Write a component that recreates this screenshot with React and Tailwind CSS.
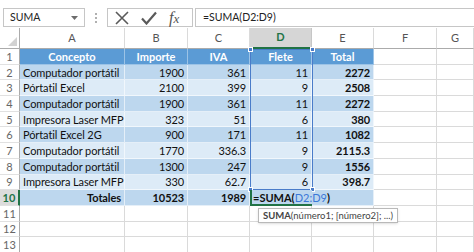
import React from "react";

const rows = [
  ["Computador portátil", "1900", "361", "11", "2272"],
  ["Pórtatil Excel", "2100", "399", "9", "2508"],
  ["Computador portátil", "1900", "361", "11", "2272"],
  ["Impresora Laser MFP", "323", "51", "6", "380"],
  ["Pórtatil Excel 2G", "900", "171", "11", "1082"],
  ["Computador portátil", "1770", "336.3", "9", "2115.3"],
  ["Computador portátil", "1300", "247", "9", "1556"],
  ["Impresora Laser MFP", "330", "62.7", "6", "398.7"],
];

const letters = ["A", "B", "C", "D", "E", "F", "G"];

const RowHead = ({ n, active }) => (
  <div
    className={`h-[15.7px] flex items-center justify-center text-[11px] leading-none border-b border-[#e1e1e1] ${
      active
        ? "bg-[#dcdcdc] text-[#217346] font-bold border-r-2 border-r-[#217346]"
        : "bg-white text-[#666] border-r border-r-[#ababab]"
    }`}
  >
    {n}
  </div>
);

const Empty = () => <div className="h-[15.7px] bg-white border-r border-b border-[#dadada]" />;

const Cell = ({ children, bg, align = "right", bold }) => (
  <div
    className={`h-[15.7px] flex items-center px-[3px] text-[11px] tracking-[-0.1px] leading-none text-[#111] whitespace-nowrap border-r border-b border-white/60 ${bg} ${
      align === "right" ? "justify-end" : align === "center" ? "justify-center" : "justify-start"
    } ${bold ? "font-bold" : ""}`}
  >
    {children}
  </div>
);

export default function App() {
  return (
    <div className="w-[474px] h-[252px] overflow-hidden bg-white font-['Lato','Open_Sans',sans-serif]">
      {/* formula bar */}
      <div className="h-[28px] pt-[8px] flex items-start bg-white">
        <div className="ml-[3px] w-[82px] h-[19px] border border-[#c6c6c6] flex items-center justify-between pl-[6px] pr-[6px] text-[10.5px] text-[#222]">
          <span>SUMA</span>
          <svg width="7" height="4" viewBox="0 0 7 4">
            <path d="M0 0h7L3.5 4z" fill="#6d6d6d" />
          </svg>
        </div>
        <div className="w-[22px] h-[19px] flex flex-col items-center justify-center gap-[2px]">
          <span className="w-[2px] h-[2px] bg-[#b0b0b0]" />
          <span className="w-[2px] h-[2px] bg-[#b0b0b0]" />
          <span className="w-[2px] h-[2px] bg-[#b0b0b0]" />
        </div>
        <div className="w-[86px] h-[19px] border border-[#c6c6c6] flex items-center pl-[7px] gap-[12px]">
          <svg width="14" height="14" viewBox="0 0 14 14">
            <path d="M1 1l12 12M13 1L1 13" stroke="#5a5a5a" strokeWidth="1.6" fill="none" />
          </svg>
          <svg width="16" height="14" viewBox="0 0 16 14">
            <path d="M1 7.5l4.5 5L15 1.5" stroke="#5a5a5a" strokeWidth="2.2" fill="none" />
          </svg>
          <span className="font-['Liberation_Serif',serif] italic text-[#555] text-[16px] leading-none">
            f<span className="text-[13px]">x</span>
          </span>
        </div>
        <div className="ml-[2px] flex-1 h-[19px] border border-[#c6c6c6] border-r-0 flex items-center pl-[7px] text-[10.5px] text-[#222]">
          =SUMA(D2:D9)
        </div>
      </div>

      {/* sheet */}
      <div className="relative">
        <div className="grid grid-cols-[20px_105px_63px_62px_62px_62px_63px_37px]">
          {/* column headers */}
          <div className="h-[21px] bg-white border-r border-b border-[#ababab] flex items-end justify-end p-[2px]">
            <svg width="9" height="9" viewBox="0 0 9 9">
              <path d="M9 0v9H0z" fill="#d2d2d2" />
            </svg>
          </div>
          {letters.map((l) =>
            l === "D" ? (
              <div
                key={l}
                className="h-[21px] bg-[#d6d6d6] border-r border-[#c6c6c6] border-b-2 border-b-[#217346] flex items-center justify-center text-[11px] font-bold text-[#217346]"
              >
                {l}
              </div>
            ) : (
              <div
                key={l}
                className="h-[21px] bg-white border-r border-[#dadada] border-b border-b-[#ababab] flex items-center justify-center text-[11px] text-[#555]"
              >
                {l}
              </div>
            )
          )}

          {/* row 1 */}
          <RowHead n="1" />
          {["Concepto", "Importe", "IVA", "Flete", "Total"].map((t) => (
            <div
              key={t}
              className="h-[15.7px] bg-[#5b9bd5] flex items-center justify-center text-[11px] font-bold text-white border-r border-b border-white/40 leading-none"
            >
              {t}
            </div>
          ))}
          <Empty />
          <Empty />

          {/* data rows */}
          {rows.map((r, i) => {
            const bg = i % 2 === 0 ? "bg-[#bdd7ee]" : "bg-[#ddebf7]";
            return (
              <React.Fragment key={i}>
                <RowHead n={i + 2} />
                <Cell bg={bg} align="left">{r[0]}</Cell>
                <Cell bg={bg}>{r[1]}</Cell>
                <Cell bg={bg}>{r[2]}</Cell>
                <Cell bg={bg}>{r[3]}</Cell>
                <Cell bg={bg} bold>{r[4]}</Cell>
                <Empty />
                <Empty />
              </React.Fragment>
            );
          })}

          {/* totals */}
          <RowHead n="10" active />
          <Cell bg="bg-[#bdd7ee]" bold>Totales</Cell>
          <Cell bg="bg-[#bdd7ee]" bold>10523</Cell>
          <Cell bg="bg-[#bdd7ee]" bold>1989</Cell>
          <div className="h-[15.7px] bg-[#bdd7ee] border-l-2 border-b-2 border-[#217346] flex items-center pl-[1px] text-[11px] font-bold text-[#111] whitespace-nowrap leading-none overflow-visible relative z-10">
            =SUMA(<span className="font-normal text-[#3b78d8]">D2:D9</span>)
          </div>
          <div className="h-[15.7px] bg-[#bdd7ee] border-r border-b border-white/60" />
          <Empty />
          <Empty />

          {[11, 12, 13].map((n) => (
            <React.Fragment key={n}>
              <RowHead n={n} />
              <Empty />
              <Empty />
              <Empty />
              <Empty />
              <Empty />
              <Empty />
              <Empty />
            </React.Fragment>
          ))}
        </div>

        {/* range highlight on D1:D9 */}
        <div className="absolute left-[250px] top-[21px] w-[63px] h-[141.3px] border border-[#4a7cc9] pointer-events-none">
          <span className="absolute -left-[3px] -top-[3px] w-[5px] h-[5px] bg-[#4a7cc9] border border-white" />
          <span className="absolute -right-[3px] -top-[3px] w-[5px] h-[5px] bg-[#4a7cc9] border border-white" />
          <span className="absolute -left-[3px] -bottom-[3px] w-[5px] h-[5px] bg-[#4a7cc9] border border-white" />
          <span className="absolute -right-[3px] -bottom-[3px] w-[5px] h-[5px] bg-[#4a7cc9] border border-white" />
        </div>

        {/* function tooltip */}
        <div className="absolute left-[258px] top-[180px] h-[15px] px-[4px] flex items-center bg-white border border-[#b9b9b9] shadow-sm text-[9.5px] text-[#444] whitespace-nowrap leading-none z-20">
          <span className="font-bold">SUMA</span>(número1; [número2]; ...)
        </div>
      </div>
    </div>
  );
}
